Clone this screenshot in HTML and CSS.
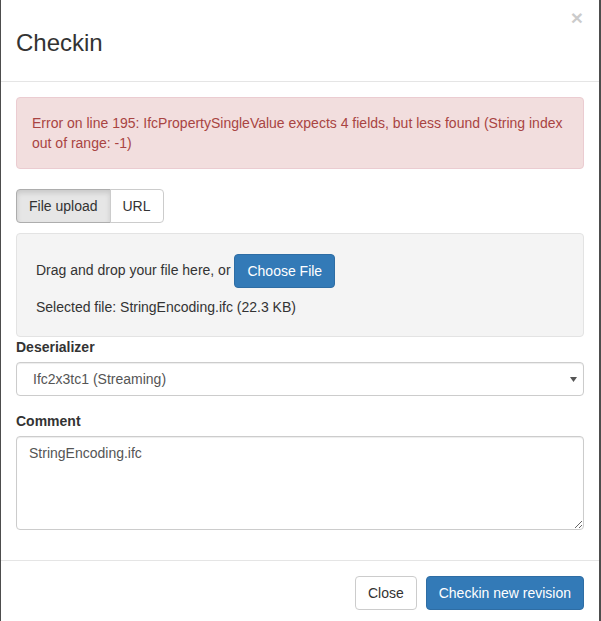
FILE: index.html
```html
<!DOCTYPE html>
<html lang="en">
<head>
  <meta charset="UTF-8">
  <meta name="viewport" content="width=device-width, initial-scale=1.0">
  <title>Checkin</title>
  <link rel="stylesheet" href="styles.css">
</head>
<body>

  <div class="modal">
    <!-- Header -->
    <div class="modal-header">
      <button class="close" type="button">&times;</button>
      <h3 class="modal-title">Checkin</h3>
    </div>

    <!-- Body -->
    <div class="modal-body">
      <div class="alert">
        Error on line 195: IfcPropertySingleValue expects 4 fields, but less found (String index out of range: -1)
      </div>

      <div class="btn-group">
        <button class="btn btn-default active" type="button">File upload</button>
        <button class="btn btn-default" type="button">URL</button>
      </div>

      <div class="drop-area">
        <div class="drop-row">
          Drag and drop your file here, or <button class="btn btn-primary" type="button">Choose File</button>
        </div>
        <div class="selected-file">Selected file: StringEncoding.ifc (22.3 KB)</div>
      </div>

      <label class="field-label" for="deserializer">Deserializer</label>
      <div class="select-wrap">
        <select id="deserializer" class="form-control">
          <option>Ifc2x3tc1 (Streaming)</option>
        </select>
        <svg class="select-arrow" width="7" height="5" viewBox="0 0 7 5"><path d="M0 0 H7 L3.5 5 Z" fill="#555"/></svg>
      </div>

      <label class="field-label" for="comment">Comment</label>
      <textarea id="comment" class="form-control comment" rows="4">StringEncoding.ifc</textarea>
    </div>

    <!-- Footer -->
    <div class="modal-footer">
      <button class="btn btn-default" type="button">Close</button>
      <button class="btn btn-primary" type="button">Checkin new revision</button>
    </div>
  </div>

</body>
</html>
```

FILE: styles.css
```css
body {
  margin: 0;
  background-color: #4d4d4d;
  font-family: "Liberation Sans", Arial, sans-serif;
  font-size: 14px;
  line-height: 20px;
  color: #333;
  height: 621px;
  overflow: hidden;
}
.modal {
  width: 598px;
  height: 621px;
  margin-left: 1px;
  background-color: #fff;
  overflow: hidden;
}
.modal-header {
  position: relative;
  padding: 15px;
  border-bottom: 1px solid #e5e5e5;
}
.modal-title {
  margin: 14px 0 10px;
  font-size: 24px;
  font-weight: normal;
  line-height: 27px;
  color: #333;
}
.close {
  position: absolute;
  top: 7px;
  right: 16px;
  padding: 0;
  border: none;
  background: none;
  font-family: "Liberation Sans", Arial, sans-serif;
  font-size: 21px;
  font-weight: bold;
  line-height: 21px;
  color: #000;
  opacity: 0.2;
  cursor: pointer;
}
.modal-body {
  padding: 15px;
}
.alert {
  padding: 15px;
  margin-bottom: 20px;
  background-color: #f2dede;
  border: 1px solid #ebccd1;
  border-radius: 4px;
  color: #a94442;
}
.btn {
  display: inline-block;
  box-sizing: border-box;
  height: 34px;
  padding: 6px 12px;
  font-family: "Liberation Sans", Arial, sans-serif;
  font-size: 14px;
  line-height: 20px;
  border: 1px solid transparent;
  border-radius: 4px;
  cursor: pointer;
  vertical-align: middle;
}
.btn-default {
  background-color: #fff;
  border-color: #ccc;
  color: #333;
}
.btn-primary {
  background-color: #337ab7;
  border-color: #2e6da4;
  color: #fff;
}
.btn-group {
  display: flex;
}
.btn-group .btn:first-child {
  border-top-right-radius: 0;
  border-bottom-right-radius: 0;
}
.btn-group .btn:last-child {
  margin-left: -1px;
  border-top-left-radius: 0;
  border-bottom-left-radius: 0;
}
.btn-default.active {
  background-color: #e6e6e6;
  border-color: #adadad;
  box-shadow: inset 0 3px 5px rgba(0, 0, 0, 0.125);
}
.drop-area {
  margin-top: 10px;
  padding: 19px;
  background-color: #f4f4f4;
  border: 1px solid #e3e3e3;
  border-radius: 4px;
}
.drop-row {
  height: 34px;
  line-height: 34px;
}
.selected-file {
  margin-top: 10px;
}
.field-label {
  display: block;
  margin-bottom: 5px;
  font-weight: bold;
}
.form-control {
  display: block;
  box-sizing: border-box;
  width: 100%;
  padding: 6px 12px;
  font-family: "Liberation Sans", Arial, sans-serif;
  font-size: 14px;
  line-height: 20px;
  color: #555;
  background-color: #fff;
  border: 1px solid #ccc;
  border-radius: 4px;
  box-shadow: inset 0 1px 1px rgba(0, 0, 0, 0.075);
}
.select-wrap {
  position: relative;
  margin-bottom: 15px;
}
select.form-control {
  height: 34px;
  padding-left: 16px;
  -webkit-appearance: none;
  appearance: none;
}
.select-arrow {
  position: absolute;
  top: 15px;
  right: 7px;
}
.comment {
  height: 94px;
  margin-bottom: 15px;
  resize: vertical;
}
.modal-footer {
  display: flex;
  justify-content: flex-end;
  gap: 9px;
  padding: 15px;
  border-top: 1px solid #e5e5e5;
}
```
